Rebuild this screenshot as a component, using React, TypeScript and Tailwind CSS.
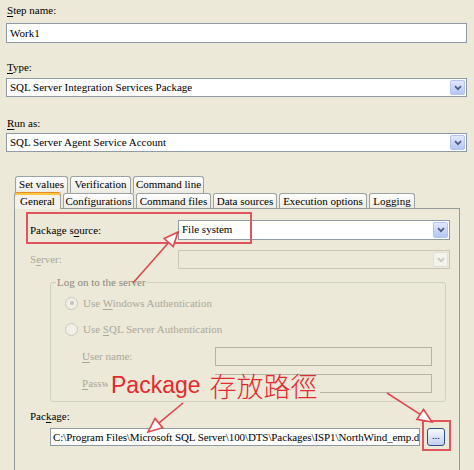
import React from "react";

const SERIF = "[font-family:'Liberation_Serif','Times_New_Roman',serif]";

function U({ children }: { children: React.ReactNode }) {
  return <span className="underline underline-offset-[2px]">{children}</span>;
}

function DropArrow({ disabled }: { disabled?: boolean }) {
  return (
    <div
      className={
        disabled
          ? "flex h-full w-[15px] items-center justify-center rounded-[2px] border border-[#e2e0d4] bg-[#f3f2ec]"
          : "flex h-full w-[15px] items-center justify-center rounded-[2px] border border-[#b3c5ef] bg-gradient-to-b from-[#e0e9fd] to-[#b4c7f4]"
      }
    >
      <svg width="8" height="6" viewBox="0 0 8 6">
        <path
          d="M1 1.2 L4 4.2 L7 1.2"
          fill="none"
          stroke={disabled ? "#c9c7ba" : "#4a5e86"}
          strokeWidth="1.7"
        />
      </svg>
    </div>
  );
}

function Select({ value, className, disabled }: { value?: string; className: string; disabled?: boolean }) {
  return (
    <div
      className={
        (disabled
          ? "flex items-stretch border border-[#c9c7ba] bg-[#ece9d8] p-[1px] "
          : "flex items-stretch border border-[#8e9aa6] bg-white p-[1px] ") + className
      }
    >
      <span className="flex-1 truncate pl-[2px] leading-[15px]">{value}</span>
      <DropArrow disabled={disabled} />
    </div>
  );
}

const backTabs = [
  { label: "Set values", w: "w-[53px]" },
  { label: "Verification", w: "w-[61px]" },
  { label: "Command line", w: "w-[71px]" },
];

const frontTabs = [
  { label: "Configurations", w: "w-[71px]" },
  { label: "Command files", w: "w-[75px]" },
  { label: "Data sources", w: "w-[64px]" },
  { label: "Execution options", w: "w-[88px]" },
  { label: "Logging", w: "w-[46px]" },
];

function Tab({ label, w, h }: { label: string; w: string; h: string }) {
  return (
    <div
      className={`${w} ${h} shrink-0 whitespace-nowrap rounded-t-[3px] border border-b-0 border-[#9ca3a3] bg-gradient-to-b from-[#ffffff] to-[#eceae2] text-center leading-[15px]`}
    >
      {label}
    </div>
  );
}

function Radio({ checked }: { checked?: boolean }) {
  return (
    <div className="flex h-[13px] w-[13px] items-center justify-center rounded-full border border-[#cac8bb] bg-[#f1efe6]">
      {checked && <div className="h-[4px] w-[4px] rounded-full bg-[#c4c2b4]" />}
    </div>
  );
}

export default function App() {
  return (
    <div className={`relative h-[470px] w-[474px] overflow-hidden bg-[#ece9d8] text-[11px] text-black ${SERIF}`}>
      <div className="pl-[6px] pr-[7px] pt-[3px]">
        <div className="h-[14px] pl-[1px] leading-[14px]">
          <U>S</U>tep name:
        </div>
        <div className="mt-[6px] flex h-[20px] items-center border border-[#8e9aa6] bg-white pl-[3px]">Work1</div>

        <div className="mt-[17px] h-[14px] pl-[1px] leading-[14px]">
          <U>T</U>ype:
        </div>
        <Select value="SQL Server Integration Services Package" className="mt-[4px] h-[19px]" />

        <div className="mt-[19px] h-[14px] pl-[1px] leading-[14px]">
          <U>R</U>un as:
        </div>
        <Select value="SQL Server Agent Service Account" className="mt-[3px] h-[19px]" />

        {/* tab control */}
        <div className="ml-[8px] mt-[24px] w-[446px]">
          <div className="flex h-[17px] items-end gap-[2px] pl-[1px]">
            {backTabs.map((t) => (
              <Tab key={t.label} label={t.label} w={t.w} h="h-[17px]" />
            ))}
          </div>
          <div className="flex h-[15px] items-end gap-[2px]">
            <div className="relative z-10 -mb-[1px] h-[17px] w-[47px] shrink-0 rounded-t-[3px] border border-b-0 border-[#9ca3a3] border-t-[#e68b2c] bg-[#f4f2ea] text-center leading-[16px] shadow-[inset_0_2px_0_#ffc73c]">
              General
            </div>
            {frontTabs.map((t) => (
              <Tab key={t.label} label={t.label} w={t.w} h="h-[15px]" />
            ))}
          </div>

          <div className="h-[270px] border border-[#919b9c] bg-[#ece9d8]">
            <div className="mt-[11px] flex h-[20px] items-center pl-[15px]">
              <div className="w-[148px]">
                Package s<U>o</U>urce:
              </div>
              <Select value="File system" className="h-[20px] w-[272px]" />
            </div>

            <div className="mt-[10px] flex h-[19px] items-center pl-[15px] text-[#aca899]">
              <div className="w-[148px]">
                S<U>e</U>rver:
              </div>
              <Select disabled className="h-[19px] w-[272px]" />
            </div>

            <fieldset className="ml-[35px] mt-[6px] w-[396px] rounded-[3px] border border-[#d0d0bf] pb-[8px] text-[#aca899]">
              <legend className="ml-[5px] px-[1px] leading-[14px] text-[#8a887c]">Log on to the server</legend>
              <div className="ml-[14px] mt-[7px] flex h-[14px] items-center gap-[5px]">
                <Radio checked />
                <span>
                  Use <U>W</U>indows Authentication
                </span>
              </div>
              <div className="ml-[14px] mt-[12px] flex h-[14px] items-center gap-[5px]">
                <Radio />
                <span>
                  Use <U>S</U>QL Server Authentication
                </span>
              </div>
              <div className="mt-[11px] flex h-[19px] items-center pl-[31px]">
                <div className="w-[133px]">
                  <U>U</U>ser name:
                </div>
                <div className="h-[19px] w-[217px] border border-[#b6b4a6] bg-[#ece9d8]" />
              </div>
              <div className="mt-[8px] flex h-[19px] items-center pl-[31px]">
                <div className="w-[133px]">
                  <U>P</U>assword:
                </div>
                <div className="h-[19px] w-[217px] border border-[#b6b4a6] bg-[#ece9d8]" />
              </div>
            </fieldset>

            <div className="mt-[7px] h-[14px] pl-[15px] leading-[14px]">
              Pac<U>k</U>age:
            </div>
            <div className="ml-[35px] mt-[5px] flex h-[18px] items-center gap-[7px]">
              <div className="h-[18px] w-[370px] overflow-hidden whitespace-nowrap border border-[#8e9aa6] bg-white pl-[2px] text-[11px] leading-[16px] tracking-[-0.1px]">
                C:\Program Files\Microsoft SQL Server\100\DTS\Packages\ISP1\NorthWind_emp.dtsx
              </div>
              <div className="flex h-[18px] w-[18px] items-center justify-center rounded-[3px] border border-[#2e4f8e] bg-gradient-to-b from-[#f7f9ff] to-[#c3d0ee] pb-[3px] text-[10px] leading-none">
                ...
              </div>
            </div>
          </div>
        </div>
      </div>

      {/* annotations */}
      <div className="absolute left-[26px] top-[212px] h-[32px] w-[226px] border-2 border-[#e0555b]" />
      <div className="absolute left-[422px] top-[420px] h-[31px] w-[29px] border-2 border-[#e0555b]" />

      <div className="absolute left-[108px] top-[375px] flex h-[21px] items-center bg-[#ece9d8] pl-[3px] pr-[2px] leading-[21px] text-[#e42a2f]">
        <span className="text-[23px] [font-family:'Liberation_Sans',Arial,sans-serif]">Package</span>
        <span className="ml-[9px] text-[27px] font-light [font-family:'Noto_Sans_CJK_TC','Noto_Sans_CJK_SC',sans-serif]">
          存放路徑
        </span>
      </div>

      <svg className="pointer-events-none absolute left-0 top-0" width="474" height="470">
        <g stroke="#e0474d" strokeWidth="1.6" fill="#ffffff">
          <line x1="133" y1="283" x2="168.7" y2="242.5" />
          <polygon points="178,232 173.2,246.5 164.2,238.5" />
          <line x1="183" y1="403" x2="158.8" y2="423.1" />
          <polygon points="148,432 162.6,427.7 155,418.5" />
          <line x1="387" y1="393" x2="420.2" y2="414.4" />
          <polygon points="432,422 416.9,419.4 423.5,409.4" />
        </g>
      </svg>
    </div>
  );
}
